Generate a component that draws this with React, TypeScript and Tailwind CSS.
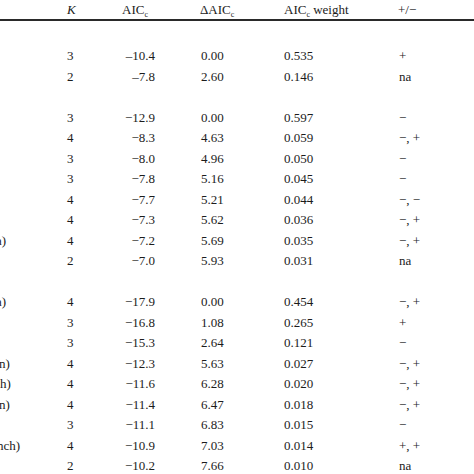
import React from "react";

type Row = { label?: string; off?: string; k?: string; aic?: string; d?: string; w?: string; s?: string; empty?: boolean };

const rows: Row[] = [
  { k: "3", aic: "–10.4", d: "0.00", w: "0.535", s: "+" },
  { k: "2", aic: "–7.8", d: "2.60", w: "0.146", s: "na" },
  { empty: true },
  { k: "3", aic: "−12.9", d: "0.00", w: "0.597", s: "−" },
  { k: "4", aic: "−8.3", d: "4.63", w: "0.059", s: "−, +" },
  { k: "3", aic: "−8.0", d: "4.96", w: "0.050", s: "−" },
  { k: "3", aic: "−7.8", d: "5.16", w: "0.045", s: "−" },
  { k: "4", aic: "−7.7", d: "5.21", w: "0.044", s: "−, −" },
  { k: "4", aic: "−7.3", d: "5.62", w: "0.036", s: "−, +" },
  { label: "a)", off: "a", k: "4", aic: "−7.2", d: "5.69", w: "0.035", s: "−, +" },
  { k: "2", aic: "−7.0", d: "5.93", w: "0.031", s: "na" },
  { empty: true },
  { label: "a)", off: "a", k: "4", aic: "−17.9", d: "0.00", w: "0.454", s: "−, +" },
  { k: "3", aic: "−16.8", d: "1.08", w: "0.265", s: "+" },
  { k: "3", aic: "−15.3", d: "2.64", w: "0.121", s: "−" },
  { label: "n)", off: "n", k: "4", aic: "−12.3", d: "5.63", w: "0.027", s: "−, +" },
  { label: "h)", off: "h", k: "4", aic: "−11.6", d: "6.28", w: "0.020", s: "−, +" },
  { label: "n)", off: "n", k: "4", aic: "−11.4", d: "6.47", w: "0.018", s: "−, +" },
  { k: "3", aic: "−11.1", d: "6.83", w: "0.015", s: "−" },
  { label: "nch)", off: "nch", k: "4", aic: "−10.9", d: "7.03", w: "0.014", s: "+, +" },
  { k: "2", aic: "−10.2", d: "7.66", w: "0.010", s: "na" },
];

function Label({ r }: { r: Row }) {
  if (!r.label) return <div />;
  let cls = "";
  if (r.off === "a") cls = "-ml-[4px]";
  else if (r.off === "n") cls = "-ml-[1px]";
  else if (r.off === "h") cls = "ml-0";
  else cls = "-ml-[3px]";
  return (
    <div className="overflow-hidden whitespace-nowrap">
      <span className={cls + " inline-block"}>{r.label}</span>
    </div>
  );
}

export default function App() {
  return (
    <div
      className="w-[474px] h-[474px] overflow-hidden bg-white text-[#1c1c1c] text-[13px]"
      style={{ fontFamily: '"Liberation Serif", "Times New Roman", serif' }}
    >
      <div className="grid grid-cols-[67px_55px_78px_84px_114px_1fr] h-[21px] items-center border-b-2 border-[#2a2a2a]">
        <div />
        <div className="italic">K</div>
        <div>
          AIC<sub className="text-[8px] align-baseline relative top-[3px]">c</sub>
        </div>
        <div>
          ΔAIC<sub className="text-[8px] align-baseline relative top-[3px]">c</sub>
        </div>
        <div>
          AIC<sub className="text-[8px] align-baseline relative top-[3px]">c</sub> weight
        </div>
        <div>+/−</div>
      </div>
      <div className="h-[24.75px]" />
      {rows.map((r, i) =>
        r.empty ? (
          <div key={i} className="h-[20.5px]" />
        ) : (
          <div key={i} className="grid grid-cols-[67px_55px_78px_84px_114px_1fr] h-[20.5px] items-center">
            <Label r={r} />
            <div>{r.k}</div>
            <div className="text-right pr-[45px]">{r.aic}</div>
            <div className="pl-px">{r.d}</div>
            <div>{r.w}</div>
            <div className="pl-px">{r.s}</div>
          </div>
        )
      )}
    </div>
  );
}
